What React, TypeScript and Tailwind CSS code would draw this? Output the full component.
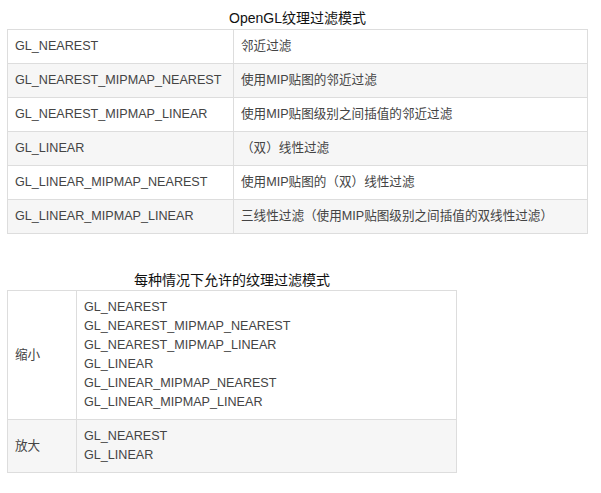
const font = { fontFamily: '"Liberation Sans", "Noto Sans CJK SC", sans-serif' };

const filters = [
  ["GL_NEAREST", "邻近过滤"],
  ["GL_NEAREST_MIPMAP_NEAREST", "使用MIP贴图的邻近过滤"],
  ["GL_NEAREST_MIPMAP_LINEAR", "使用MIP贴图级别之间插值的邻近过滤"],
  ["GL_LINEAR", "（双）线性过滤"],
  ["GL_LINEAR_MIPMAP_NEAREST", "使用MIP贴图的（双）线性过滤"],
  ["GL_LINEAR_MIPMAP_LINEAR", "三线性过滤（使用MIP贴图级别之间插值的双线性过滤）"],
];

const allowed: [string, string[]][] = [
  [
    "缩小",
    [
      "GL_NEAREST",
      "GL_NEAREST_MIPMAP_NEAREST",
      "GL_NEAREST_MIPMAP_LINEAR",
      "GL_LINEAR",
      "GL_LINEAR_MIPMAP_NEAREST",
      "GL_LINEAR_MIPMAP_LINEAR",
    ],
  ],
  ["放大", ["GL_NEAREST", "GL_LINEAR"]],
];

export default function App() {
  return (
    <div className="min-h-[493px] bg-white px-[7px] text-[#444]" style={font}>
      <div className="w-[581px] pt-[8px] pb-[1px] text-center text-[14px] leading-[20px] text-[#111]">
        OpenGL纹理过滤模式
      </div>
      <div className="w-[581px] border border-[#ddd] text-[12.6px] leading-[19px]">
        {filters.map(([name, desc], i) => (
          <div
            key={name}
            className={`flex ${i > 0 ? "border-t border-[#ddd]" : ""} ${i % 2 === 1 ? "bg-[#f6f6f6]" : ""}`}
          >
            <div className="w-[226px] shrink-0 border-r border-[#ddd] px-[7px] py-[7px]">{name}</div>
            <div className="flex-1 px-[7px] py-[7px]">{desc}</div>
          </div>
        ))}
      </div>

      <div className="mt-[36px] w-[450px] text-center text-[14px] leading-[20px] text-[#111]">
        每种情况下允许的纹理过滤模式
      </div>
      <div className="w-[450px] border border-[#ddd] text-[12.6px] leading-[19px]">
        {allowed.map(([label, modes], i) => (
          <div
            key={label}
            className={`flex ${i > 0 ? "border-t border-[#ddd] bg-[#f6f6f6]" : ""}`}
          >
            <div className="flex w-[69px] shrink-0 items-center border-r border-[#ddd] px-[7px] py-[7px]">
              {label}
            </div>
            <div className="flex-1 px-[7px] py-[7px]">
              {modes.map((m) => (
                <div key={m}>{m}</div>
              ))}
            </div>
          </div>
        ))}
      </div>
    </div>
  );
}
